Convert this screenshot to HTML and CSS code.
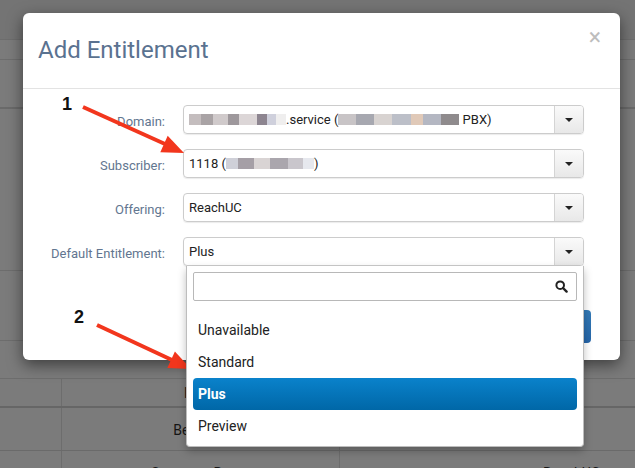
FILE: index.html
```html
<!DOCTYPE html>
<html lang="en">
<head>
  <meta charset="UTF-8">
  <title>Add Entitlement</title>
  <link rel="stylesheet" href="styles.css">
</head>
<body>
  <!-- page behind the modal, dimmed -->
  <div class="page">
    <div class="band band-top"></div>
    <div class="band band-nav"></div>
    <div class="band band-tools"></div>
    <div class="band band-filter"></div>
    <div class="band band-pager"></div>
    <div class="band band-gap"></div>
    <div class="grid-row grid-head">
      <div class="cell"></div>
      <div class="cell cell-left">Name</div>
      <div class="cell"></div>
    </div>
    <div class="grid-row">
      <div class="cell"></div>
      <div class="cell">Best Buy</div>
      <div class="cell">Plus</div>
    </div>
    <div class="grid-row">
      <div class="cell"></div>
      <div class="cell">Samsung Beam</div>
      <div class="cell cell-right">ReachUC</div>
    </div>
  </div>

  <div class="modal">
    <div class="modal-header">
      <h1>Add Entitlement</h1>
      <span class="close">&times;</span>
    </div>

    <div class="modal-body">
      <div class="form-row">
        <label>Domain:</label>
        <div class="select">
          <span class="value"><span class="blur blur-a"></span>.service (<span class="blur blur-b"></span> PBX)</span>
          <span class="select-btn"><i class="caret"></i></span>
        </div>
      </div>
      <div class="form-row">
        <label>Subscriber:</label>
        <div class="select">
          <span class="value">1118 (<span class="blur blur-c"></span>)</span>
          <span class="select-btn"><i class="caret"></i></span>
        </div>
      </div>
      <div class="form-row">
        <label>Offering:</label>
        <div class="select">
          <span class="value">ReachUC</span>
          <span class="select-btn"><i class="caret"></i></span>
        </div>
      </div>
      <div class="form-row">
        <label>Default Entitlement:</label>
        <div class="select open">
          <span class="value">Plus</span>
          <span class="select-btn"><i class="caret"></i></span>

          <div class="dropdown">
            <div class="search">
              <svg width="13" height="13" viewBox="0 0 13 13">
                <circle cx="5.2" cy="5.2" r="3.8" fill="none" stroke="#222" stroke-width="2"/>
                <line x1="8" y1="8" x2="11.6" y2="11.6" stroke="#222" stroke-width="2.4" stroke-linecap="round"/>
              </svg>
            </div>
            <ul class="options">
              <li>Unavailable</li>
              <li>Standard</li>
              <li class="selected">Plus</li>
              <li>Preview</li>
            </ul>
          </div>
        </div>
      </div>
    </div>

    <div class="modal-footer">
      <button class="btn-primary">Save</button>
    </div>
  </div>

  <!-- annotation layer -->
  <span class="step step-1">1</span>
  <span class="step step-2">2</span>
  <svg class="arrows" width="635" height="468" viewBox="0 0 635 468">
    <line x1="83" y1="107" x2="165" y2="144" stroke="#f2361d" stroke-width="4"/>
    <polygon points="184,153 160.3,152.2 167.7,135.8" fill="#f2361d"/>
    <line x1="97" y1="325" x2="172" y2="360" stroke="#f2361d" stroke-width="4"/>
    <polygon points="191,369 167.3,367.9 174.9,351.5" fill="#f2361d"/>
  </svg>
</body>
</html>
```

FILE: styles.css
```css
body {
  margin: 0;
  width: 635px;
  height: 468px;
  overflow: hidden;
  position: relative;
  background: #7b7b7b;
  font-family: Roboto, "Liberation Sans", sans-serif;
  font-size: 13px;
  color: #222;
}

/* dimmed page */
.page {
  width: 635px;
}

.band {
  border-bottom: 1px solid #6d6d6d;
}

.band-top {
  height: 39px;
  background: #747474;
}

.band-nav {
  height: 19px;
}

.band-tools {
  height: 47px;
  border-bottom: 2px solid #6a6a6a;
}

.band-filter {
  height: 161px;
}

.band-pager {
  height: 69px;
}

.band-gap {
  height: 37px;
}

.grid-row {
  display: grid;
  grid-template-columns: 62px 278px 1fr;
  height: 42px;
  border-bottom: 1px solid #6a6a6a;
}

.grid-head {
  height: 27px;
  border-bottom: 2px solid #666;
}

.cell {
  border-right: 1px solid #6d6d6d;
  text-align: center;
  padding-top: 14px;
  font-size: 14px;
  color: #151515;
}

.grid-head .cell {
  padding-top: 6px;
}

.cell:last-child {
  border-right: none;
}

.cell-left {
  text-align: left;
  padding-left: 122px;
}

.cell-right {
  text-align: right;
  padding-right: 35px;
}

/* modal */
.modal {
  position: absolute;
  left: 23px;
  top: 13px;
  width: 597px;
  height: 347px;
  background: #fff;
  border-radius: 6px;
  box-shadow: 0 5px 15px rgba(0, 0, 0, 0.5);
}

.modal-header {
  position: relative;
  height: 76px;
  box-sizing: border-box;
  padding: 23px 15px 0;
  border-bottom: 1px solid #e3e3e3;
}

.modal-header h1 {
  margin: 0;
  font-size: 24px;
  font-weight: 400;
  line-height: 28px;
  color: #5a7290;
}

.close {
  position: absolute;
  right: 19px;
  top: 11px;
  font-size: 23px;
  color: #bdbdbd;
  font-weight: 400;
}

.modal-body {
  padding-top: 16px;
}

.form-row {
  display: flex;
  align-items: center;
  height: 29px;
  margin-bottom: 15px;
}

.form-row label {
  width: 142px;
  margin-right: 18px;
  text-align: right;
  color: #627690;
  padding-top: 3px;
}

.select {
  position: relative;
  display: flex;
  width: 401px;
  height: 29px;
  box-sizing: border-box;
  border: 1px solid #ccc;
  border-radius: 4px;
  box-shadow: 0 1px 1px rgba(0, 0, 0, 0.08);
}

.select .value {
  flex: 1;
  padding: 0 5px;
  line-height: 27px;
  white-space: nowrap;
  overflow: hidden;
}

.select-btn {
  width: 28px;
  border-left: 1px solid #d4d4d4;
  background: linear-gradient(#fafafa, #e8e8e8);
  border-radius: 0 3px 3px 0;
  display: flex;
  align-items: center;
  justify-content: center;
}

.caret {
  border-left: 4px solid transparent;
  border-right: 4px solid transparent;
  border-top: 4px solid #222;
}

.blur {
  display: inline-block;
  height: 11px;
  vertical-align: -1px;
}

.blur-a {
  width: 97px;
  background: linear-gradient(90deg, #c4bdbe 0 12%, #a9a3a5 12% 25%, #d0cacb 25% 40%, #9e989c 40% 52%, #dcd6d7 52% 70%, #8d8590 70% 80%, #cfd0dc 80% 90%, #efeeee 90%);
}

.blur-b {
  width: 121px;
  background: linear-gradient(90deg, #c8c4c6 0 15%, #a7a8b0 15% 30%, #d8d3d1 30% 45%, #bcbfc8 45% 60%, #e0c9b8 60% 70%, #b4b7c2 70% 85%, #8f8b8d 85%);
}

.blur-c {
  width: 88px;
  background: linear-gradient(90deg, #cfd0d8 0 14%, #a59fa6 14% 32%, #d9d4d4 32% 50%, #aaa6ad 50% 70%, #c9c6cc 70% 88%, #e6e8ee 88%);
}

/* open dropdown */
.dropdown {
  position: absolute;
  top: calc(100% + 1px);
  left: 2px;
  width: 398px;
  height: 181px;
  box-sizing: border-box;
  background: #fff;
  border: 1px solid #bdbdbd;
  border-top: none;
  border-radius: 0 0 4px 4px;
  box-shadow: 0 4px 8px rgba(0, 0, 0, 0.25);
  padding: 6px 6px 0;
  z-index: 2;
}

.search {
  height: 29px;
  box-sizing: border-box;
  border: 1px solid #b8b8b8;
  border-radius: 2px;
  display: flex;
  align-items: center;
  justify-content: flex-end;
  padding-right: 8px;
  margin-bottom: 13px;
}

.options {
  list-style: none;
  margin: 0;
  padding: 0;
}

.options li {
  height: 32px;
  line-height: 32px;
  padding-left: 5px;
  font-size: 14px;
  color: #222;
  border-radius: 4px;
}

.options li.selected {
  background: linear-gradient(#0a82cb, #0067a7);
  color: #fff;
  font-weight: 700;
}

.modal-footer {
  display: flex;
  justify-content: flex-end;
  padding: 29px 29px 0;
}

.btn-primary {
  width: 80px;
  height: 33px;
  border: none;
  border-radius: 4px;
  background: linear-gradient(#337ab7, #2565a8);
  color: #fff;
  font-family: inherit;
  font-size: 14px;
}

/* annotations */
.arrows {
  position: absolute;
  left: 0;
  top: 0;
  pointer-events: none;
}

.step {
  position: absolute;
  font-family: "Liberation Sans", Arial, sans-serif;
  font-weight: 700;
  font-size: 18px;
  color: #111;
}

.step-1 {
  left: 62px;
  top: 94px;
}

.step-2 {
  left: 74px;
  top: 307px;
}
```
